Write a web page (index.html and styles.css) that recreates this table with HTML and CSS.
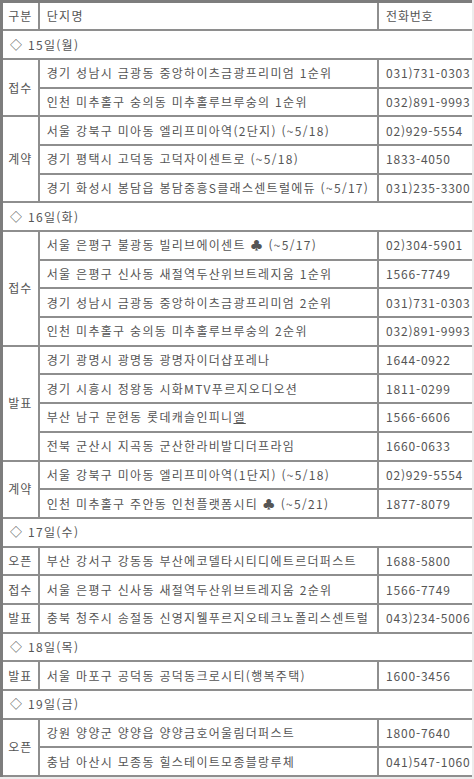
FILE: index.html
```html
<!DOCTYPE html>
<html lang="ko">
<head>
<meta charset="utf-8">
<title>분양 일정</title>
<link rel="stylesheet" href="styles.css">
</head>
<body>
<div class="page">
<table class="sched">
  <colgroup>
    <col class="c-type">
    <col class="c-name">
    <col class="c-tel">
  </colgroup>
  <tbody>
    <tr class="head"><td class="type">구분</td><td>단지명</td><td class="tel">전화번호</td></tr>

    <tr class="day"><td colspan="3">◇ 15일(월)</td></tr>
    <tr><td class="type" rowspan="2">접수</td><td>경기 성남시 금광동 중앙하이츠금광프리미엄 1순위</td><td class="tel">031)731-0303</td></tr>
    <tr><td>인천 미추홀구 숭의동 미추홀루브루숭의 1순위</td><td class="tel">032)891-9993</td></tr>
    <tr><td class="type" rowspan="3">계약</td><td>서울 강북구 미아동 엘리프미아역(2단지) (~5/18)</td><td class="tel">02)929-5554</td></tr>
    <tr><td>경기 평택시 고덕동 고덕자이센트로 (~5/18)</td><td class="tel">1833-4050</td></tr>
    <tr><td>경기 화성시 봉담읍 봉담중흥S클래스센트럴에듀 (~5/17)</td><td class="tel">031)235-3300</td></tr>

    <tr class="day"><td colspan="3">◇ 16일(화)</td></tr>
    <tr><td class="type" rowspan="4">접수</td><td>서울 은평구 불광동 빌리브에이센트 ♣ (~5/17)</td><td class="tel">02)304-5901</td></tr>
    <tr><td>서울 은평구 신사동 새절역두산위브트레지움 1순위</td><td class="tel">1566-7749</td></tr>
    <tr><td>경기 성남시 금광동 중앙하이츠금광프리미엄 2순위</td><td class="tel">031)731-0303</td></tr>
    <tr><td>인천 미추홀구 숭의동 미추홀루브루숭의 2순위</td><td class="tel">032)891-9993</td></tr>
    <tr><td class="type" rowspan="4">발표</td><td>경기 광명시 광명동 광명자이더샵포레나</td><td class="tel">1644-0922</td></tr>
    <tr><td>경기 시흥시 정왕동 시화MTV푸르지오디오션</td><td class="tel">1811-0299</td></tr>
    <tr><td>부산 남구 문현동 롯데캐슬인피니<span class="ul">엘</span></td><td class="tel">1566-6606</td></tr>
    <tr><td>전북 군산시 지곡동 군산한라비발디더프라임</td><td class="tel">1660-0633</td></tr>
    <tr><td class="type" rowspan="2">계약</td><td>서울 강북구 미아동 엘리프미아역(1단지) (~5/18)</td><td class="tel">02)929-5554</td></tr>
    <tr><td>인천 미추홀구 주안동 인천플랫폼시티 ♣ (~5/21)</td><td class="tel">1877-8079</td></tr>

    <tr class="day"><td colspan="3">◇ 17일(수)</td></tr>
    <tr><td class="type">오픈</td><td>부산 강서구 강동동 부산에코델타시티디에트르더퍼스트</td><td class="tel">1688-5800</td></tr>
    <tr><td class="type">접수</td><td>서울 은평구 신사동 새절역두산위브트레지움 2순위</td><td class="tel">1566-7749</td></tr>
    <tr><td class="type">발표</td><td>충북 청주시 송절동 신영지웰푸르지오테크노폴리스센트럴</td><td class="tel">043)234-5006</td></tr>

    <tr class="day"><td colspan="3">◇ 18일(목)</td></tr>
    <tr><td class="type">발표</td><td>서울 마포구 공덕동 공덕동크로시티(행복주택)</td><td class="tel">1600-3456</td></tr>

    <tr class="day"><td colspan="3">◇ 19일(금)</td></tr>
    <tr><td class="type" rowspan="2">오픈</td><td>강원 양양군 양양읍 양양금호어울림더퍼스트</td><td class="tel">1800-7640</td></tr>
    <tr><td>충남 아산시 모종동 힐스테이트모종블랑루체</td><td class="tel">041)547-1060</td></tr>
  </tbody>
</table>
</div>
</body>
</html>
```

FILE: styles.css
```css
html, body {
  margin: 0;
  padding: 0;
  background: #ececec;
}

.page {
  width: 474px;
  height: 779px;
  overflow: hidden;
  background: #ececec;
}

.sched {
  border-collapse: collapse;
  width: 472px;
  background: #fff;
  font-family: "Noto Sans CJK KR", "Noto Sans", sans-serif;
  font-size: 12px;
  letter-spacing: 1.3px;
  color: #555;
  border-top: 3px solid #7d7d7d;
  border-left: 3px solid #7d7d7d;
}

.c-type { width: 38px; }
.c-name { width: 340px; }
.c-tel { width: 94px; }

.sched td {
  border: 2px solid #8e8e8e;
  height: 28.7px;
  padding: 0 0 0 7px;
  box-sizing: border-box;
  white-space: nowrap;
  vertical-align: middle;
  line-height: 14px;
}

.sched tr td:last-child {
  border-right: 0;
}

.sched td.type {
  padding: 0;
  text-align: center;
  letter-spacing: 1px;
}

.sched td.tel {
  letter-spacing: 0.8px;
}

.day td {
  padding-left: 7px;
}

.ul {
  text-decoration: underline;
}
```
